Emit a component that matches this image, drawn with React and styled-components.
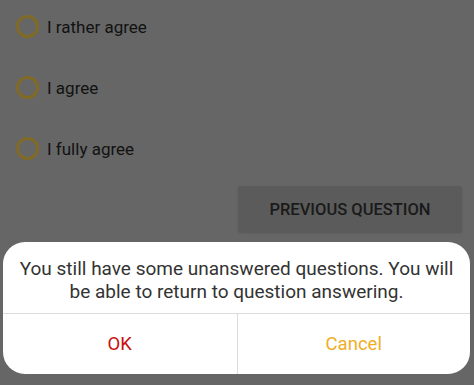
import React from 'react'
import { styled, createGlobalStyle } from 'styled-components'

const GlobalStyle = createGlobalStyle`
  html, body {
    margin: 0;
    padding: 0;
    background: #666666;
    font-family: Roboto, "Liberation Sans", sans-serif;
  }
`

const options = ['I rather agree', 'I agree', 'I fully agree']

function App() {
  return (
    <Page>
      <GlobalStyle />
      <OptionList>
        {options.map((label) => (
          <Option key={label}>
            <Radio />
            <OptionLabel>{label}</OptionLabel>
          </Option>
        ))}
      </OptionList>
      <Actions>
        <PrevButton>PREVIOUS QUESTION</PrevButton>
      </Actions>
      <Dialog>
        <Message>
          You still have some unanswered questions. You will be able to return to question answering.
        </Message>
        <ButtonRow>
          <DialogButton $color="#c80f0f">OK</DialogButton>
          <DialogButton $color="#efae24">Cancel</DialogButton>
        </ButtonRow>
      </Dialog>
    </Page>
  )
}

const Page = styled.div`
  width: 474px;
  height: 385px;
  overflow: hidden;
  background: #666666;
  display: flex;
  flex-direction: column;
`

const OptionList = styled.div`
  display: flex;
  flex-direction: column;
  gap: 38px;
  padding: 15px 0 0 16px;
`

const Option = styled.div`
  display: flex;
  align-items: center;
  height: 23px;
  gap: 8px;
`

const Radio = styled.span`
  box-sizing: border-box;
  width: 23px;
  height: 23px;
  border-radius: 50%;
  border: 3px solid #806b26;
`

const OptionLabel = styled.span`
  font-size: 17px;
  color: #121212;
`

const Actions = styled.div`
  display: flex;
  justify-content: flex-end;
  padding: 26px 12px 0 0;
`

const PrevButton = styled.div`
  width: 224px;
  height: 46px;
  display: flex;
  align-items: center;
  justify-content: center;
  background: #5b5b5b;
  border-radius: 2px;
  box-shadow: 0 1px 2px rgba(0, 0, 0, 0.15);
  font-size: 16.5px;
  font-weight: 500;
  color: #1a1a1a;
`

const Dialog = styled.div`
  margin: 10px 4px 0 3px;
  background: #ffffff;
  border-radius: 22px;
  overflow: hidden;
  display: flex;
  flex-direction: column;
`

const Message = styled.div`
  padding: 15px 10px 10px;
  text-align: center;
  font-size: 19px;
  line-height: 23px;
  color: #333333;
  border-bottom: 1.5px solid #dcdcdc;
`

const ButtonRow = styled.div`
  display: grid;
  grid-template-columns: 1fr 1fr;
  height: 60px;
`

const DialogButton = styled.div`
  display: flex;
  align-items: center;
  justify-content: center;
  font-size: 18.5px;
  color: ${(p) => p.$color};

  & + & {
    border-left: 1.5px solid #dcdcdc;
  }
`

export default App
